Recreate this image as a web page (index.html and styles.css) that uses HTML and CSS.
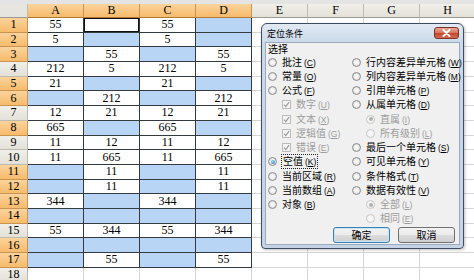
FILE: index.html
```html
<!DOCTYPE html>
<html lang="zh-CN">
<head>
<meta charset="utf-8">
<title>定位条件</title>
<link rel="stylesheet" href="styles.css">
</head>
<body>
<div class="strip"></div>
<table class="sheet">
  <colgroup><col class="rh"><col class="c"><col class="c"><col class="c"><col class="c"><col class="c"><col class="c"><col class="c"><col class="c"></colgroup>
  <tr class="hdr"><th class="corner"></th><th class="s">A</th><th class="s">B</th><th class="s">C</th><th class="s">D</th><th>E</th><th>F</th><th>G</th><th>H</th></tr>
  <tr><th class="s">1</th><td class="d">55</td><td class="d act"></td><td class="d">55</td><td class="d b"></td><td></td><td></td><td></td><td></td></tr>
  <tr><th class="s">2</th><td class="d">5</td><td class="d b"></td><td class="d">5</td><td class="d b"></td><td></td><td></td><td></td><td></td></tr>
  <tr><th class="s">3</th><td class="d b"></td><td class="d">55</td><td class="d b"></td><td class="d">55</td><td></td><td></td><td></td><td></td></tr>
  <tr><th>4</th><td class="d">212</td><td class="d">5</td><td class="d">212</td><td class="d">5</td><td></td><td></td><td></td><td></td></tr>
  <tr><th class="s">5</th><td class="d">21</td><td class="d b"></td><td class="d">21</td><td class="d b"></td><td></td><td></td><td></td><td></td></tr>
  <tr><th class="s">6</th><td class="d b"></td><td class="d">212</td><td class="d b"></td><td class="d">212</td><td></td><td></td><td></td><td></td></tr>
  <tr><th>7</th><td class="d">12</td><td class="d">21</td><td class="d">12</td><td class="d">21</td><td></td><td></td><td></td><td></td></tr>
  <tr><th class="s">8</th><td class="d">665</td><td class="d b"></td><td class="d">665</td><td class="d b"></td><td></td><td></td><td></td><td></td></tr>
  <tr><th>9</th><td class="d">11</td><td class="d">12</td><td class="d">11</td><td class="d">12</td><td></td><td></td><td></td><td></td></tr>
  <tr><th>10</th><td class="d">11</td><td class="d">665</td><td class="d">11</td><td class="d">665</td><td></td><td></td><td></td><td></td></tr>
  <tr><th class="s">11</th><td class="d b"></td><td class="d">11</td><td class="d b"></td><td class="d">11</td><td></td><td></td><td></td><td></td></tr>
  <tr><th class="s">12</th><td class="d b"></td><td class="d">11</td><td class="d b"></td><td class="d">11</td><td></td><td></td><td></td><td></td></tr>
  <tr><th class="s">13</th><td class="d">344</td><td class="d b"></td><td class="d">344</td><td class="d b"></td><td></td><td></td><td></td><td></td></tr>
  <tr><th class="s">14</th><td class="d b"></td><td class="d b"></td><td class="d b"></td><td class="d b"></td><td></td><td></td><td></td><td></td></tr>
  <tr><th>15</th><td class="d">55</td><td class="d">344</td><td class="d">55</td><td class="d">344</td><td></td><td></td><td></td><td></td></tr>
  <tr><th class="s">16</th><td class="d b"></td><td class="d b"></td><td class="d b"></td><td class="d b"></td><td></td><td></td><td></td><td></td></tr>
  <tr><th class="s">17</th><td class="d b"></td><td class="d">55</td><td class="d b"></td><td class="d">55</td><td></td><td></td><td></td><td></td></tr>
  <tr><th>18</th><td></td><td></td><td></td><td></td><td></td><td></td><td></td><td></td></tr>
</table>

<div class="dlg">
  <div class="title">
    <span>定位条件</span>
    <span class="close"><svg width="9" height="8" viewBox="0 0 9 8"><path d="M1.5 1 L7.5 7 M7.5 1 L1.5 7" stroke="#fff" stroke-width="2" stroke-linecap="round"/></svg></span>
  </div>
  <div class="body">
    <div class="legend">选择</div>
    <div class="opts">
      <div class="col l">
        <div class="opt"><span class="rb"></span><span>批注<span class="k">(<u>C</u>)</span></span></div>
        <div class="opt"><span class="rb"></span><span>常量<span class="k">(<u>O</u>)</span></span></div>
        <div class="opt"><span class="rb"></span><span>公式<span class="k">(<u>F</u>)</span></span></div>
        <div class="opt ind dis"><span class="cb"><svg width="7" height="7" viewBox="0 0 7 7"><path d="M1 3.6 L2.8 5.6 L6 1.2" fill="none" stroke="#9a9a9a" stroke-width="1.2"/></svg></span><span>数字<span class="k">(<u>U</u>)</span></span></div>
        <div class="opt ind dis"><span class="cb"><svg width="7" height="7" viewBox="0 0 7 7"><path d="M1 3.6 L2.8 5.6 L6 1.2" fill="none" stroke="#9a9a9a" stroke-width="1.2"/></svg></span><span>文本<span class="k">(<u>X</u>)</span></span></div>
        <div class="opt ind dis"><span class="cb"><svg width="7" height="7" viewBox="0 0 7 7"><path d="M1 3.6 L2.8 5.6 L6 1.2" fill="none" stroke="#9a9a9a" stroke-width="1.2"/></svg></span><span>逻辑值<span class="k">(<u>G</u>)</span></span></div>
        <div class="opt ind dis"><span class="cb"><svg width="7" height="7" viewBox="0 0 7 7"><path d="M1 3.6 L2.8 5.6 L6 1.2" fill="none" stroke="#9a9a9a" stroke-width="1.2"/></svg></span><span>错误<span class="k">(<u>E</u>)</span></span></div>
        <div class="opt"><span class="rb on"></span><span class="foc">空值<span class="k">(<u>K</u>)</span></span></div>
        <div class="opt"><span class="rb"></span><span>当前区域<span class="k">(<u>R</u>)</span></span></div>
        <div class="opt"><span class="rb"></span><span>当前数组<span class="k">(<u>A</u>)</span></span></div>
        <div class="opt"><span class="rb"></span><span>对象<span class="k">(<u>B</u>)</span></span></div>
      </div>
      <div class="col r">
        <div class="opt"><span class="rb"></span><span>行内容差异单元格<span class="k">(<u>W</u>)</span></span></div>
        <div class="opt"><span class="rb"></span><span>列内容差异单元格<span class="k">(<u>M</u>)</span></span></div>
        <div class="opt"><span class="rb"></span><span>引用单元格<span class="k">(<u>P</u>)</span></span></div>
        <div class="opt"><span class="rb"></span><span>从属单元格<span class="k">(<u>D</u>)</span></span></div>
        <div class="opt ind dis"><span class="rb on"></span><span>直属<span class="k">(<u>I</u>)</span></span></div>
        <div class="opt ind dis"><span class="rb"></span><span>所有级别<span class="k">(<u>L</u>)</span></span></div>
        <div class="opt"><span class="rb"></span><span>最后一个单元格<span class="k">(<u>S</u>)</span></span></div>
        <div class="opt"><span class="rb"></span><span>可见单元格<span class="k">(<u>Y</u>)</span></span></div>
        <div class="opt"><span class="rb"></span><span>条件格式<span class="k">(<u>T</u>)</span></span></div>
        <div class="opt"><span class="rb"></span><span>数据有效性<span class="k">(<u>V</u>)</span></span></div>
        <div class="opt ind dis"><span class="rb on"></span><span>全部<span class="k">(<u>L</u>)</span></span></div>
        <div class="opt ind dis"><span class="rb"></span><span>相同<span class="k">(<u>E</u>)</span></span></div>
      </div>
    </div>
    <div class="btns">
      <button class="btn def">确定</button>
      <button class="btn">取消</button>
    </div>
  </div>
</div>
</body>
</html>
```

FILE: styles.css
```css
* { box-sizing: border-box; }
html, body { margin: 0; padding: 0; }
body {
  width: 474px;
  height: 280px;
  overflow: hidden;
  position: relative;
  background: #fff;
  font-family: "Liberation Serif", serif;
}

.strip { height: 4px; background: #e4e4e4; }

.sheet {
  border-collapse: separate;
  border-spacing: 0;
  table-layout: fixed;
  width: 476px;
}
.sheet col.rh { width: 28px; }
.sheet col.c { width: 56px; }
.sheet tr { height: 14.7px; }
.sheet tr.hdr { height: 14px; }

.sheet th, .sheet td {
  padding: 0;
  font-weight: normal;
  font-size: 12px;
  line-height: 11px;
  text-align: center;
  vertical-align: middle;
  white-space: nowrap;
  overflow: hidden;
  color: #000;
}
.sheet td {
  border-right: 1px solid #d6d6d6;
  border-bottom: 1px solid #d6d6d6;
}
.sheet td.d { border-right-color: #343a42; border-bottom-color: #343a42; }
.sheet td.b { background: #b8d5f6; }
.sheet td.act { box-shadow: inset 0 0 0 1px #111; }

.sheet th {
  background: linear-gradient(#f0efe9, #e3e1d8);
  border-right: 1px solid #bdbab0;
  border-bottom: 1px solid #bdbab0;
}
.sheet th.s {
  background: linear-gradient(#fbd39c, #f7bb6c);
  border-right-color: #c99452;
  border-bottom-color: #c99452;
}
.sheet tr.hdr th { border-bottom-color: #9a9890; }
.sheet tr.hdr th.s { border-bottom-color: #b07a3c; }
.sheet th.corner { background: #e6e5df; }

/* dialog */
.dlg {
  position: absolute;
  left: 261px;
  top: 23px;
  width: 203px;
  height: 226px;
  border: 1px solid #3d4c60;
  border-radius: 6px 6px 4px 4px;
  background: linear-gradient(#e2eaf4, #cbd9ea 18px, #c4d3e6);
  padding: 0 3px 3px;
  display: flex;
  flex-direction: column;
  font-family: "Noto Sans CJK SC", sans-serif;
  color: #000;
  box-shadow: 1px 1px 3px rgba(0, 0, 0, 0.25);
}
.title {
  height: 18px;
  display: flex;
  align-items: center;
  justify-content: space-between;
  padding-left: 2px;
  font-size: 9px;
  flex: none;
}
.close {
  align-self: flex-start;
  margin-top: 3px;
  margin-right: 1px;
  width: 25px;
  height: 12px;
  border: 1px solid #7c3428;
  border-radius: 3px;
  background: linear-gradient(#e9a896 0%, #d9785f 45%, #c5452b 52%, #d36a50 100%);
  display: flex;
  align-items: center;
  justify-content: center;
}
.close svg { display: block; }

.body {
  flex: 1;
  background: #f0f0f0;
  border: 1px solid #9aaabf;
  display: flex;
  flex-direction: column;
  padding: 0 0 0 2px;
}
.legend {
  font-size: 10px;
  line-height: 12px;
  height: 12px;
}
.opts { display: flex; }
.col.l { width: 84px; flex: none; }
.col.r { flex: 1; }
.opt {
  height: 14.25px;
  display: flex;
  align-items: center;
  gap: 5px;
  font-size: 10px;
  line-height: 12px;
  white-space: nowrap;
}
.opt.ind { padding-left: 14px; }
.opt.dis { color: #9c9c9c; }
.k {
  font-family: "Liberation Sans", sans-serif;
  font-size: 8.5px;
  margin-left: 2px;
}
.foc { outline: 1px dotted #222; padding: 0 1px; }

.rb {
  flex: none;
  position: relative;
  width: 9px;
  height: 9px;
  border-radius: 50%;
  border: 1px solid #8c8d8d;
  background: radial-gradient(circle, #f6f6f6 0 35%, #d3d3d3 80%);
}
.rb.on::after {
  content: "";
  position: absolute;
  left: 1.5px;
  top: 1.5px;
  width: 4px;
  height: 4px;
  border-radius: 50%;
  background: radial-gradient(circle at 40% 35%, #9ad8ff, #1b6fb0);
}
.dis .rb { border-color: #c6c6c6; background: #f5f5f5; }
.dis .rb.on::after { background: #b0b0b0; }

.cb {
  flex: none;
  width: 9px;
  height: 9px;
  border: 1px solid #bbbbbb;
  background: #f4f4f4;
  display: flex;
  align-items: center;
  justify-content: center;
}
.cb svg { display: block; }

.btns {
  margin-top: auto;
  margin-bottom: 1px;
  display: flex;
  justify-content: flex-end;
  gap: 8px;
  padding-right: 4px;
}
.btn {
  width: 57px;
  height: 16px;
  padding: 0;
  font-family: "Noto Sans CJK SC", sans-serif;
  font-size: 10px;
  line-height: 14px;
  color: #000;
  border: 1px solid #707070;
  border-radius: 3px;
  background: linear-gradient(#f3f3f3 0%, #ebebeb 48%, #dcdcdc 52%, #cfcfcf 100%);
}
.btn.def {
  border-color: #3c7fb1;
  box-shadow: inset 0 0 0 1px #c4e6fb;
}
```
